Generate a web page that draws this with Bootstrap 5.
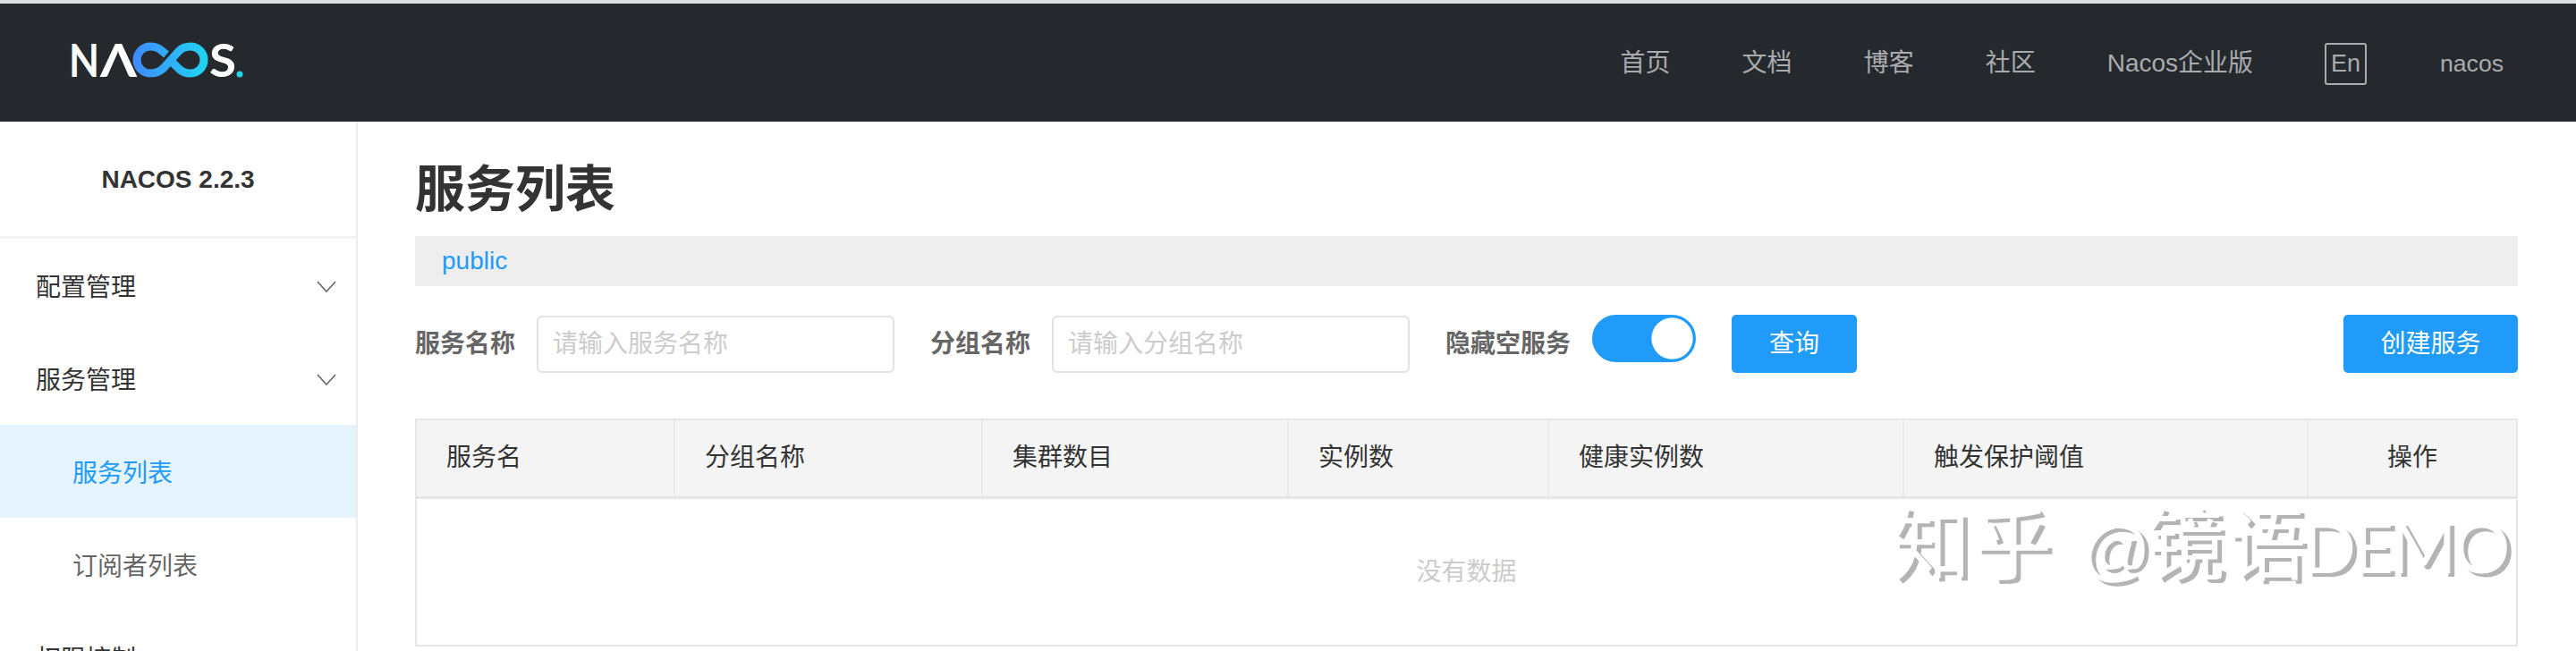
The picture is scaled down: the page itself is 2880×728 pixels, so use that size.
<!DOCTYPE html>
<html lang="zh-CN">
<head>
  <meta charset="UTF-8">
  <title>Nacos</title>
  <link href="https://cdn.jsdelivr.net/npm/bootstrap@5.3.3/dist/css/bootstrap.min.css" rel="stylesheet">
  <style>
    body {
      font-family: "Liberation Sans", "Noto Sans CJK SC", sans-serif;
      font-size: 28px;
      color: #333;
      background: #fff;
    }
    .page-shell { position: relative; height: 728px; overflow: hidden; }
    .top-bar {
      height: 136px;
      background: #25292d;
      border-top: 4px solid #dedfe0;
      padding: 0 81px 0 76px;
    }
    .top-links { gap: 80px; padding-top: 2px; }
    .top-links a { color: #a9abad; text-decoration: none; line-height: 1; }
    .top-links .user-name { font-size: 26.6px; margin-left: 2px; }
    .lang-box {
      width: 47px;
      height: 47px;
      border: 2px solid #a9abad;
      border-radius: 3px;
      font-size: 27px;
    }
    .side-menu { width: 400px; border-right: 2px solid #eee; flex: none; }
    .side-title {
      height: 131px;
      padding-top: 2px;
      border-bottom: 3px solid #f2f2f2;
      font-weight: 700;
    }
    .side-item { height: 104px; padding: 5px 22px 0 40px; }
    .side-item svg { margin-bottom: 3px; }
    .side-sub { height: 104px; padding: 5px 0 0 81px; color: #666; }
    .side-sub.active-item { background: #e4f3fe; color: #209bfa; }
    .main-pane { padding: 36px 65px 0 64px; }
    .page-title { font-size: 56px; font-weight: 700; line-height: 80px; margin: 0 0 12px; color: #333; }
    .ns-bar { height: 56px; background: #eee; padding-left: 30px; color: #209bfa; margin-bottom: 32px; }
    .filter-row { height: 65px; margin-bottom: 51px; }
    .filter-label { font-weight: 700; color: #666; white-space: nowrap; }
    .label-gap { margin-left: 40px; }
    .filter-input {
      width: 400px;
      height: 64px;
      padding: 0 16px;
      font-size: 28px;
      border: 2px solid #e2e2e2;
      border-radius: 6px;
      box-shadow: none;
    }
    .filter-input::placeholder { color: #ccc; }
    .svc-switch.form-check-input {
      width: 116px;
      height: 53px;
      margin: 0 0 12px;
      border: 0;
      border-radius: 27px;
      background-color: #209bfa;
      background-size: contain;
      background-position: right center;
      background-image: url("data:image/svg+xml,%3csvg xmlns='http://www.w3.org/2000/svg' viewBox='-4 -4 8 8'%3e%3ccircle r='3.5' fill='%23fff'/%3e%3c/svg%3e");
    }
    .blue-btn {
      height: 65px;
      background: #209bfa;
      border: 0;
      border-radius: 5px;
      color: #fff;
      font-size: 28px;
      padding: 0;
    }
    .blue-btn:hover { background: #209bfa; color: #fff; }
    .search-btn { width: 140px; margin-left: 40px; }
    .create-btn { width: 195px; }
    .svc-table { border: 2px solid #e6e6e6; }
    .svc-table table { table-layout: fixed; width: 2347px; }
    .svc-table th {
      height: 86px;
      background: #f4f4f4;
      font-weight: 400;
      color: #333;
      padding: 0 0 0 33px;
      vertical-align: middle;
      border-bottom: 3px solid #e6e6e6;
      border-left: 2px solid #ebebeb;
    }
    .svc-table th:first-child { border-left: 0; }
    .svc-table th.op-col { padding: 0; text-align: center; }
    .svc-table td {
      height: 165px;
      text-align: center;
      vertical-align: middle;
      color: #ccc;
      border: 0;
      padding: 2px 0 0;
    }
    .w-1 { width: 288px; } .w-2 { width: 344px; } .w-3 { width: 342px; } .w-4 { width: 291px; }
    .w-5 { width: 397px; } .w-6 { width: 452px; } .w-7 { width: 233px; }
    .zhihu-mark {
      position: absolute;
      left: 2115px;
      top: 560px;
      font-size: 88px;
      line-height: 100px;
      white-space: nowrap;
      color: #fff;
      text-shadow: 5px 4px 0 #b4b4b4;
    }
    .zhihu-mark .mark-cjk { letter-spacing: 3px; }
    .zhihu-mark .mark-name { margin-right: -8px; }
    .zhihu-mark .mark-at { font-size: 76px; margin-left: 30px; margin-right: -5px; font-family: "Liberation Sans", sans-serif; }
    .zhihu-mark .mark-latin { font-family: Lato, "Liberation Sans", sans-serif; font-size: 80px; letter-spacing: -4px; }
  </style>
</head>
<body>
<div class="page-shell">
  <!-- header -->
  <header class="top-bar d-flex align-items-center justify-content-between">
    <svg width="200" height="68" viewBox="76 36 200 68">
      <defs>
        <linearGradient id="loopGrad" gradientUnits="userSpaceOnUse" x1="152" y1="0" x2="232" y2="0">
          <stop offset="0" stop-color="#3f8cff"/>
          <stop offset="1" stop-color="#1fd6f2"/>
        </linearGradient>
      </defs>
      <text x="77" y="86" font-family="Lato, sans-serif" font-weight="700" font-size="52" fill="#fff" textLength="34" lengthAdjust="spacingAndGlyphs">N</text>
      <text x="112" y="86" font-family="Lato, sans-serif" font-weight="700" font-size="52" fill="#fff" textLength="41" lengthAdjust="spacingAndGlyphs">Λ</text>
      <path d="M186 61 L180 56 Q175 52 168 52 A15 15 0 0 0 168 82 Q177 82 183 76 L200 57 Q205 52 213 52 A15 15 0 0 1 213 82 Q205 82 200 77 L193 70" fill="none" stroke="url(#loopGrad)" stroke-width="9"/>
      <text x="234" y="86" font-family="Lato, sans-serif" font-weight="700" font-size="52" fill="#fff" textLength="30" lengthAdjust="spacingAndGlyphs">S</text>
      <circle cx="268" cy="83" r="3.5" fill="#22d3e6"/>
    </svg>
    <nav class="top-links d-flex align-items-center">
      <a href="#">首页</a>
      <a href="#">文档</a>
      <a href="#">博客</a>
      <a href="#">社区</a>
      <a href="#">Nacos企业版</a>
      <a href="#" class="lang-box d-flex align-items-center justify-content-center">En</a>
      <a href="#" class="user-name">nacos</a>
    </nav>
  </header>

  <div class="d-flex">
    <!-- sidebar -->
    <aside class="side-menu">
      <div class="side-title d-flex align-items-center justify-content-center">NACOS 2.2.3</div>
      <div class="side-item d-flex align-items-center justify-content-between">
        配置管理
        <svg width="22" height="13" viewBox="0 0 22 13"><path d="M1 1 L11 12 L21 1" fill="none" stroke="#666" stroke-width="1.6"/></svg>
      </div>
      <div class="side-item d-flex align-items-center justify-content-between">
        服务管理
        <svg width="22" height="13" viewBox="0 0 22 13"><path d="M1 1 L11 12 L21 1" fill="none" stroke="#666" stroke-width="1.6"/></svg>
      </div>
      <div class="side-sub active-item d-flex align-items-center">服务列表</div>
      <div class="side-sub d-flex align-items-center">订阅者列表</div>
      <div class="side-item d-flex align-items-center justify-content-between">权限控制</div>
    </aside>

    <!-- main -->
    <main class="main-pane flex-grow-1">
      <h1 class="page-title">服务列表</h1>
      <div class="ns-bar d-flex align-items-center">public</div>

      <div class="filter-row d-flex align-items-center">
        <span class="filter-label">服务名称</span>
        <input class="form-control filter-input ms-4 flex-shrink-0" placeholder="请输入服务名称">
        <span class="filter-label label-gap">分组名称</span>
        <input class="form-control filter-input ms-4 flex-shrink-0" placeholder="请输入分组名称">
        <span class="filter-label label-gap">隐藏空服务</span>
        <input class="form-check-input svc-switch ms-4 flex-shrink-0" type="checkbox" role="switch" checked>
        <button class="btn blue-btn search-btn">查询</button>
        <button class="btn blue-btn create-btn ms-auto">创建服务</button>
      </div>

      <div class="svc-table">
        <table class="table mb-0">
          <thead>
            <tr>
              <th class="w-1">服务名</th>
              <th class="w-2">分组名称</th>
              <th class="w-3">集群数目</th>
              <th class="w-4">实例数</th>
              <th class="w-5">健康实例数</th>
              <th class="w-6">触发保护阈值</th>
              <th class="w-7 op-col">操作</th>
            </tr>
          </thead>
          <tbody>
            <tr><td colspan="7">没有数据</td></tr>
          </tbody>
        </table>
      </div>
    </main>
  </div>

  <div class="zhihu-mark"><span class="mark-cjk">知乎</span><span class="mark-at">@</span><span class="mark-cjk mark-name">镜语</span><span class="mark-latin">DEMO</span></div>
</div>
</body>
</html>
